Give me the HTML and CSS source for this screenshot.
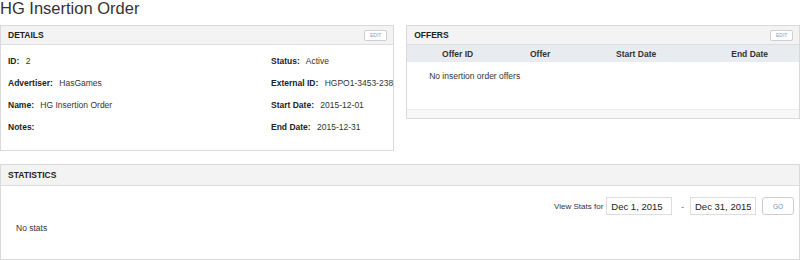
FILE: index.html
```html
<!DOCTYPE html>
<html lang="en">
<head>
  <meta charset="UTF-8">
  <title>HG Insertion Order</title>
  <link rel="stylesheet" href="styles.css">
</head>
<body>
  <h1 class="page-title">HG Insertion Order</h1>

  <div class="top-row">
    <div class="panel details">
      <div class="panel-head">
        <span>DETAILS</span>
        <button class="edit-btn">EDIT</button>
      </div>
      <div class="details-body">
        <div class="field"><b>ID:</b> <span>2</span></div>
        <div class="field"><b>Status:</b> <span>Active</span></div>
        <div class="field"><b>Advertiser:</b> <span>HasGames</span></div>
        <div class="field"><b>External ID:</b> <span>HGPO1-3453-238</span></div>
        <div class="field"><b>Name:</b> <span>HG Insertion Order</span></div>
        <div class="field"><b>Start Date:</b> <span>2015-12-01</span></div>
        <div class="field"><b>Notes:</b></div>
        <div class="field"><b>End Date:</b> <span>2015-12-31</span></div>
      </div>
    </div>

    <div class="panel offers">
      <div class="panel-head">
        <span>OFFERS</span>
        <button class="edit-btn">EDIT</button>
      </div>
      <table class="offers-table">
        <thead>
          <tr>
            <th class="c-id">Offer ID</th>
            <th class="c-offer">Offer</th>
            <th class="c-start">Start Date</th>
            <th class="c-end">End Date</th>
          </tr>
        </thead>
      </table>
      <div class="empty-offers">No insertion order offers</div>
      <div class="panel-foot"></div>
    </div>
  </div>

  <div class="panel stats">
    <div class="panel-head stats-head">
      <span>STATISTICS</span>
    </div>
    <div class="stats-body">
      <div class="stats-range">
        <label>View Stats for</label>
        <input type="text" class="date-input" value="Dec 1, 2015">
        <span class="dash">-</span>
        <input type="text" class="date-input" value="Dec 31, 2015">
        <button class="go-btn">GO</button>
      </div>
      <div class="no-stats">No stats</div>
    </div>
  </div>
</body>
</html>
```

FILE: styles.css
```css
body {
  margin: 0;
  font-family: "Liberation Sans", Arial, sans-serif;
  color: #333;
  background: #fff;
  font-size: 8.5px;
}
.page-title {
  margin: 0;
  font-size: 16.5px;
  font-weight: normal;
  line-height: 16px;
  color: #333;
}

.panel { border: 1px solid #d9d9d9; background: #fff; }
.panel-head {
  display: flex;
  align-items: center;
  justify-content: space-between;
  height: 18px;
  padding: 0 6px 0 7px;
  background: #f3f3f3;
  border-bottom: 1px solid #dedede;
  font-weight: bold;
  font-size: 8.5px;
  color: #222;
}
.edit-btn {
  width: 23px;
  height: 11px;
  padding: 0;
  border: 1px solid #cfcfcf;
  border-radius: 2px;
  background: #fff;
  color: #8a9cc0;
  font-family: inherit;
  font-size: 5px;
}

.top-row {
  display: flex;
  align-items: flex-start;
  gap: 12px;
  margin-top: 9px;
}
.details { flex: 0 0 392px; }
.offers { flex: 0 0 392px; }

.details-body {
  display: grid;
  grid-template-columns: 263px 1fr;
  grid-auto-rows: 22px;
  align-items: center;
  padding: 5px 0 12px 7px;
}
.field { white-space: nowrap; }
.field b { margin-right: 4px; color: #222; }

.offers-table {
  width: 100%;
  border-collapse: collapse;
}
.offers-table th {
  height: 17px;
  padding: 0;
  background: #e8ecf0;
  font-weight: bold;
  font-size: 8.5px;
  color: #333;
  text-align: center;
}
.c-id { width: 101px; }
.c-offer { width: 64px; }
.c-start { width: 128px; }
.empty-offers {
  height: 28px;
  line-height: 28px;
  padding-left: 22px;
}
.panel-foot {
  height: 8px;
  margin-top: 19px;
  background: #f8f8f8;
  border-top: 1px solid #ececec;
}

.stats { margin-top: 13px; }
.stats-head { height: 20px; }
.stats-body { padding: 11px 5px 26px 15px; }
.stats-range {
  display: flex;
  align-items: center;
  justify-content: flex-end;
  font-size: 8px;
}
.stats-range label { margin-right: 3px; }
.date-input {
  box-sizing: border-box;
  width: 66px;
  height: 18px;
  padding: 0 4px;
  border: 1px solid #ddd;
  font-family: inherit;
  font-size: 9.5px;
  color: #222;
}
.dash { margin: 0 6px 0 9px; }
.go-btn {
  box-sizing: border-box;
  width: 32px;
  height: 18px;
  margin-left: 6px;
  padding: 0;
  border: 1px solid #ccc;
  border-radius: 3px;
  background: #fff;
  color: #6f8fc8;
  font-family: inherit;
  font-size: 6.5px;
}
.no-stats { margin-top: 8px; }
```
